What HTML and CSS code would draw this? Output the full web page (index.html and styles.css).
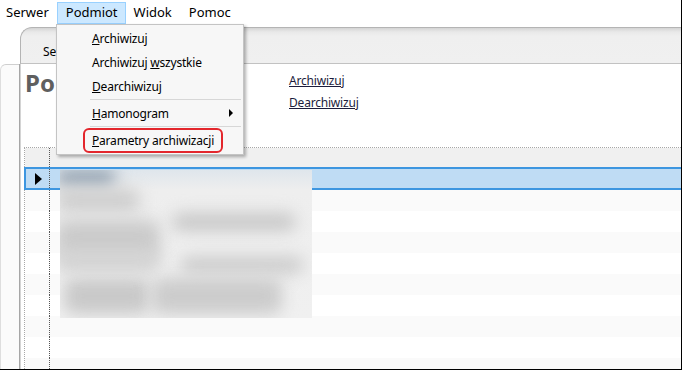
FILE: index.html
```html
<!DOCTYPE html>
<html lang="pl">
<head>
<meta charset="utf-8">
<title>Podmioty</title>
<link rel="stylesheet" href="styles.css">
</head>
<body>
<div class="screen">
  <div class="menubar">
    <span class="mb-item">Serwer</span>
    <span class="mb-item active">Podmiot</span>
    <span class="mb-item">Widok</span>
    <span class="mb-item">Pomoc</span>
  </div>
  <div class="tabstrip">
    <div class="tab-gap"></div>
    <div class="tab"><span class="tab-label">Se</span></div>
  </div>
  <div class="main">
    <div class="side"></div>
    <div class="divider"></div>
    <div class="content">
      <div class="head">
        <h1 class="title">Po</h1>
        <div class="links">
          <a class="link">Archiwizuj</a>
          <a class="link">Dearchiwizuj</a>
        </div>
      </div>
      <div class="grid">
        <div class="row grid-head"><div class="rh"></div></div>
        <div class="row selected"><div class="rh"><span class="pointer"></span></div></div>
        <div class="row odd"><div class="rh"></div></div>
        <div class="row"><div class="rh"></div></div>
        <div class="row odd"><div class="rh"></div></div>
        <div class="row"><div class="rh"></div></div>
        <div class="row odd"><div class="rh"></div></div>
        <div class="row"><div class="rh"></div></div>
        <div class="row odd"><div class="rh"></div></div>
        <div class="row"><div class="rh"></div></div>
        <div class="row odd"><div class="rh"></div></div>
        <div class="redacted">
          <span class="blob b1"></span>
          <span class="blob b2"></span>
          <span class="blob b3"></span>
          <span class="blob b4"></span>
          <span class="blob b5"></span>
          <span class="blob b6"></span>
          <span class="blob b7"></span>
          <span class="blob b8"></span>
        </div>
      </div>
    </div>
  </div>

  <div class="dropdown">
    <div class="mi"><span class="lbl"><u>A</u>rchiwizuj</span></div>
    <div class="mi"><span class="lbl">Archiwizuj <u>w</u>szystkie</span></div>
    <div class="mi"><span class="lbl"><u>D</u>earchiwizuj</span></div>
    <div class="sep"></div>
    <div class="mi"><span class="lbl"><u>H</u>amonogram</span><span class="arrow"></span></div>
    <div class="sep"></div>
    <div class="mi"><span class="lbl marked"><u>P</u>arametry archiwizacji</span></div>
  </div>
</div>
</body>
</html>
```

FILE: styles.css
```css
html, body {
  margin: 0;
  padding: 0;
  background: #ffffff;
}

.screen {
  position: relative;
  width: 682px;
  height: 370px;
  box-sizing: border-box;
  border-right: 1px solid #000;
  border-bottom: 1px solid #000;
  overflow: hidden;
  background: #fff;
  font-family: "Noto Sans", "Open Sans", sans-serif;
  color: #000;
  display: flex;
  flex-direction: column;
}

/* ---------- menu bar ---------- */
.menubar {
  height: 24px;
  display: flex;
  align-items: stretch;
  font-size: 13px;
  flex: none;
}

.mb-item {
  display: flex;
  align-items: center;
  padding: 0 8px 0 7px;
  border: 1px solid transparent;
  border-bottom: 0;
  line-height: 1;
}

.mb-item:first-child {
  padding-left: 5px;
  padding-right: 7px;
}

.mb-item.active {
  margin-top: 2px;
  padding: 0 7px 2px 8px;
  background: #cce8ff;
  border-color: #99d1ff;
  border-bottom: 1px solid #99d1ff;
}

/* ---------- tab strip ---------- */
.tabstrip {
  height: 40px;
  display: flex;
  flex: none;
}

.tab-gap {
  width: 20px;
  flex: none;
}

.tab {
  flex: 1;
  margin-top: 3px;
  box-sizing: border-box;
  border-top: 1px solid #b4b4b4;
  border-left: 1px solid #b4b4b4;
  border-bottom: 1px solid #c2c2c2;
  border-top-left-radius: 12px;
  background: linear-gradient(#d4d4d4 0, #e9e9e9 4px, #efefef 8px, #f0f0f0 100%);
  font-size: 12px;
  padding: 15px 0 0 22px;
}

/* ---------- main ---------- */
.main {
  flex: 1;
  display: flex;
  min-height: 0;
}

.side {
  width: 19px;
  flex: none;
  box-sizing: border-box;
  border-top: 1px solid #cfcfcf;
  border-left: 1px solid #dedede;
  border-top-left-radius: 6px;
  background: #fbfbfb;
}

.divider {
  width: 2px;
  flex: none;
  background: linear-gradient(90deg, #a6a6a6 0 1px, #d4d4d4 1px 2px);
}

.content {
  flex: 1;
  display: flex;
  flex-direction: column;
  min-width: 0;
}

.head {
  height: 83px;
  flex: none;
  display: flex;
  box-sizing: border-box;
}

.title {
  margin: 0;
  width: 268px;
  flex: none;
  padding: 4px 0 0 4px;
  box-sizing: border-box;
  font-size: 24px;
  line-height: 30px;
  font-weight: 700;
  color: #5f5f5f;
  white-space: nowrap;
  overflow: hidden;
}

.links {
  display: flex;
  flex-direction: column;
  padding-top: 6px;
  font-size: 12px;
  line-height: 22px;
}

.link {
  color: #1c1c3c;
  text-decoration: underline;
  letter-spacing: -0.2px;
}

/* ---------- grid ---------- */
.grid {
  position: relative;
  flex: 1;
  margin-left: 3px;
  border-left: 1px dotted #a8a8a8;
  border-top: 1px dotted #a8a8a8;
}

.row {
  height: 21px;
  display: flex;
}

.row.odd {
  background: #fafafa;
}

.row.grid-head {
  height: 19px;
  background: #f0f0f0;
}

.rh {
  width: 24px;
  flex: none;
  border-right: 1px dotted #555;
  display: flex;
  align-items: center;
  justify-content: center;
}

.row.selected {
  height: 23px;
  box-sizing: border-box;
  margin-left: -1px;
  border-top: 2px solid #3d96e0;
  border-bottom: 2px solid #3d96e0;
  border-left: 2px solid #3d96e0;
  background: #bfdcf4;
}

.row.selected .rh {
  width: 23px;
}

.pointer {
  width: 0;
  height: 0;
  border-left: 7px solid #000;
  border-top: 6px solid transparent;
  border-bottom: 6px solid transparent;
  margin-left: 1px;
}

.redacted {
  position: absolute;
  left: 35px;
  top: 22px;
  width: 252px;
  height: 148px;
  background: linear-gradient(#dfe6ec 0, #eeeeee 20px, #f0f0f0 100%);
  overflow: hidden;
}

.blob {
  position: absolute;
  background: #c9c9c9;
  border-radius: 10px;
  filter: blur(8px);
}

.b1 { left: -4px; top: 0; width: 60px; height: 16px; background: #8e9eae; }
.b2 { left: -4px; top: 18px; width: 84px; height: 24px; background: #cfcfcf; }
.b3 { left: 112px; top: 43px; width: 124px; height: 18px; background: #c8c8c8; }
.b4 { left: -4px; top: 50px; width: 104px; height: 40px; background: #cbcbcb; }
.b5 { left: 120px; top: 86px; width: 124px; height: 18px; background: #cdcdcd; }
.b6 { left: 4px; top: 108px; width: 86px; height: 36px; background: #c9c9c9; }
.b7 { left: 92px; top: 108px; width: 130px; height: 36px; background: #cccccc; }
.b8 { left: -4px; top: 80px; width: 104px; height: 22px; background: #d3d3d3; }

/* ---------- dropdown menu ---------- */
.dropdown {
  position: absolute;
  left: 56px;
  top: 24px;
  width: 188px;
  box-sizing: border-box;
  padding: 1px 0 2px;
  background: #f7f7f7;
  border: 1px solid #c4c4c4;
  box-shadow: 2px 2px 3px rgba(0, 0, 0, 0.3);
  font-size: 12px;
  letter-spacing: -0.2px;
}

.mi {
  height: 24px;
  display: flex;
  align-items: center;
  padding-left: 26px;
  white-space: nowrap;
}

.lbl {
  padding: 0 9px;
  line-height: 21px;
}

.lbl.marked {
  padding: 0 7px;
  border: 2px solid #e3262c;
  border-radius: 6px;
  line-height: 21px;
}

.arrow {
  margin-left: auto;
  margin-right: 10px;
  width: 0;
  height: 0;
  border-left: 4px solid #000;
  border-top: 4px solid transparent;
  border-bottom: 4px solid transparent;
}

.sep {
  margin: 1px 2px 0 33px;
  height: 2px;
  border-top: 1px solid #d7d7d7;
  box-sizing: border-box;
}
```
